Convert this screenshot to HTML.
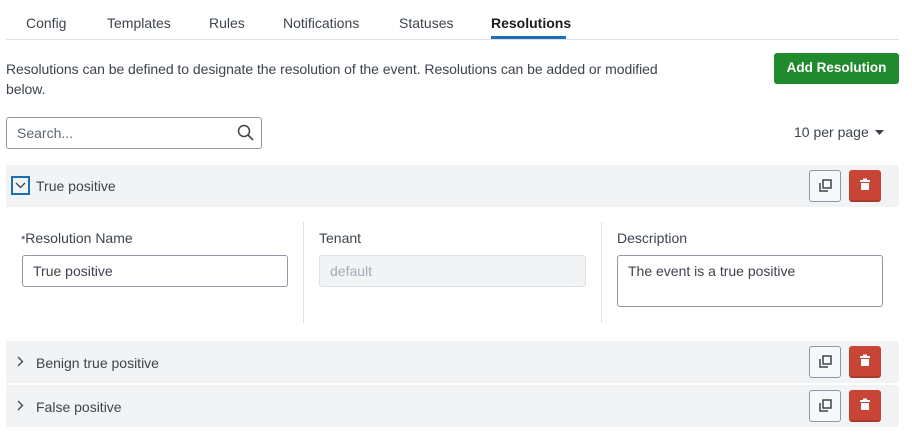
<!DOCTYPE html>
<html><head><style>
*{box-sizing:border-box;margin:0;padding:0}
body{width:912px;height:439px;background:#fff;font-family:"Liberation Sans",sans-serif;color:#3c444d;position:relative;overflow:hidden;font-size:14px}
.a{position:absolute}
.tab{position:absolute;top:15px;font-size:14px;color:#3c444d}
.row{position:absolute;left:6px;width:893px;height:42px;background:#f2f3f5}
.btnc{position:absolute;width:32px;height:32px;border:1px solid #8e98a4;border-radius:3px;background:#f7f8fa;top:5px;left:803px}
.btnd{position:absolute;width:32px;height:32px;border-radius:3px;background:#c84535;top:5px;left:843px;border-bottom:2px solid #a8392c}
.inp{position:absolute;height:32px;border:1px solid #c3cbd4;border-radius:3px;border-color:#8e98a4;font-size:14px;padding:7px 10px}
</style></head><body>
<div class="tab" style="left:26px">Config</div>
<div class="tab" style="left:107px">Templates</div>
<div class="tab" style="left:209px">Rules</div>
<div class="tab" style="left:283px">Notifications</div>
<div class="tab" style="left:399px">Statuses</div>
<div class="tab" style="left:491px;font-weight:bold;color:#1a1c20">Resolutions</div>
<div class="a" style="left:491px;top:36px;width:75px;height:3px;background:#1a6fb5"></div>
<div class="a" style="left:6px;top:39px;width:893px;height:1px;background:#dde1e6"></div>
<div class="a" style="left:6px;top:59px;width:680px;font-size:14px;line-height:20px;letter-spacing:-0.05px">Resolutions can be defined to designate the resolution of the event. Resolutions can be added or modified below.</div>
<div class="a" style="left:774px;top:53px;width:125px;height:31px;background:#1f8a2e;border-radius:3px;color:#fff;font-weight:bold;font-size:13.5px;text-align:center;line-height:30px">Add Resolution</div>
<div class="inp" style="left:6px;top:117px;width:256px;color:#5c6773">Search...</div>
<svg class="a" style="left:237px;top:124px" width="18" height="18" viewBox="0 0 18 18"><circle cx="7" cy="7" r="5.5" fill="none" stroke="#3c444d" stroke-width="1.5"/><path d="M11 11l5 5" stroke="#3c444d" stroke-width="1.6"/></svg>
<div class="a" style="left:794px;top:124px">10 per page</div>
<svg class="a" style="left:875px;top:130px" width="10" height="6"><path d="M0 0h9l-4.5 5z" fill="#3c444d"/></svg>

<div class="row" style="top:165px">
<div class="a" style="left:5px;top:11px;width:19px;height:19px;border:2px solid #1a6fb5"></div>
<svg class="a" style="left:9px;top:17px" width="11" height="7"><path d="M1 1l4.5 4.5L10 1" fill="none" stroke="#3c444d" stroke-width="1.3"/></svg>
<div class="a" style="left:30px;top:13px">True positive</div>
<div class="btnc"><svg width="30" height="30"><path d="M10 12v8h8" fill="none" stroke="#3c444d" stroke-width="1.5"/><rect x="13" y="9" width="8" height="8" fill="none" stroke="#3c444d" stroke-width="1.5"/></svg></div>
<div class="btnd"><svg width="32" height="30"><rect x="11" y="10" width="10" height="2" fill="#fff"/><rect x="14" y="8.5" width="4" height="2" fill="#fff"/><path d="M12 13h8v7h-8z" fill="#fff"/></svg></div>
</div>

<div class="a" style="left:21px;top:230px"><span style="font-size:11px">*</span>Resolution Name</div>
<div class="inp" style="left:22px;top:255px;width:266px">True positive</div>
<div class="a" style="left:303px;top:222px;width:1px;height:101px;background:#dde1e6"></div>
<div class="a" style="left:319px;top:230px">Tenant</div>
<div class="inp" style="left:319px;top:255px;width:267px;background:#f2f3f5;border-color:#dde1e6;color:#a3acb6">default</div>
<div class="a" style="left:601px;top:222px;width:1px;height:101px;background:#dde1e6"></div>
<div class="a" style="left:617px;top:230px">Description</div>
<div class="inp" style="left:617px;top:255px;width:266px;height:52px">The event is a true positive</div>

<div class="row" style="top:341px">
<svg class="a" style="left:11px;top:15px" width="8" height="11"><path d="M1 1l4.5 4.5L1 10" fill="none" stroke="#3c444d" stroke-width="1.3"/></svg>
<div class="a" style="left:30px;top:14px">Benign true positive</div>
<div class="btnc"><svg width="30" height="30"><path d="M10 12v8h8" fill="none" stroke="#3c444d" stroke-width="1.5"/><rect x="13" y="9" width="8" height="8" fill="none" stroke="#3c444d" stroke-width="1.5"/></svg></div>
<div class="btnd"><svg width="32" height="30"><rect x="11" y="10" width="10" height="2" fill="#fff"/><rect x="14" y="8.5" width="4" height="2" fill="#fff"/><path d="M12 13h8v7h-8z" fill="#fff"/></svg></div>
</div>
<div class="row" style="top:385px">
<svg class="a" style="left:11px;top:15px" width="8" height="11"><path d="M1 1l4.5 4.5L1 10" fill="none" stroke="#3c444d" stroke-width="1.3"/></svg>
<div class="a" style="left:30px;top:14px">False positive</div>
<div class="btnc"><svg width="30" height="30"><path d="M10 12v8h8" fill="none" stroke="#3c444d" stroke-width="1.5"/><rect x="13" y="9" width="8" height="8" fill="none" stroke="#3c444d" stroke-width="1.5"/></svg></div>
<div class="btnd"><svg width="32" height="30"><rect x="11" y="10" width="10" height="2" fill="#fff"/><rect x="14" y="8.5" width="4" height="2" fill="#fff"/><path d="M12 13h8v7h-8z" fill="#fff"/></svg></div>
</div>
</body></html>
